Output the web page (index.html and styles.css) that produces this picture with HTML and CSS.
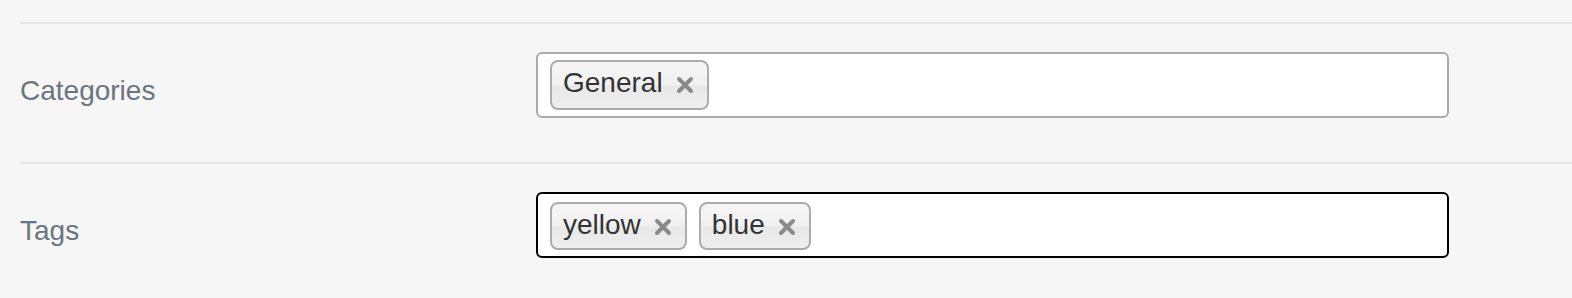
FILE: index.html
```html
<!DOCTYPE html>
<html>
<head>
<meta charset="utf-8">
<link rel="stylesheet" href="styles.css">
</head>
<body>
<div class="form">
  <div class="row">
    <div class="label">Categories</div>
    <div class="field">
      <div class="choices">
        <span class="tag">General<svg class="x" viewBox="0 0 20 20"><path d="M4 4L16 16M16 4L4 16"/></svg></span>
      </div>
    </div>
  </div>
  <div class="row">
    <div class="label">Tags</div>
    <div class="field">
      <div class="choices focus">
        <span class="tag">yellow<svg class="x" viewBox="0 0 20 20"><path d="M4 4L16 16M16 4L4 16"/></svg></span>
        <span class="tag">blue<svg class="x" viewBox="0 0 20 20"><path d="M4 4L16 16M16 4L4 16"/></svg></span>
      </div>
    </div>
  </div>
</div>
</body>
</html>
```
FILE: styles.css
```css
html, body {
  margin: 0;
  padding: 0;
  background: #f6f6f6;
  font-family: "Liberation Sans", Arial, sans-serif;
}
.form {
  padding: 22px 0 0 20px;
}
.row {
  display: grid;
  grid-template-columns: 516px 913px;
  height: 140px;
  border-top: 2px solid #e6e6e6;
  box-sizing: border-box;
}
.label {
  font-size: 28px;
  line-height: 32px;
  color: #6b7580;
  padding-top: 51px;
}
.field {
  padding-top: 28px;
}
.choices {
  box-sizing: border-box;
  width: 913px;
  height: 66px;
  border: 2px solid #ababab;
  border-radius: 6px;
  background: #fff;
  display: flex;
  gap: 12px;
  padding: 6px 12px;
  align-items: flex-start;
}
.choices.focus {
  border-color: #000;
  padding-top: 8px;
}
.tag {
  display: inline-flex;
  align-items: center;
  box-sizing: border-box;
  height: 50px;
  border: 2px solid #acacac;
  border-radius: 8px;
  background: linear-gradient(#f4f4f4 20%, #f0f0f0 50%, #e8e8e8 52%, #eeeeee 100%);
  color: #333;
  font-size: 28px;
  line-height: 32px;
  padding: 0 12px 4px 11px;
}
.focus .tag {
  height: 48px;
  padding-bottom: 2px;
}
.x {
  width: 20px;
  height: 20px;
  margin-left: 12px;
  margin-top: 4px;
  fill: none;
  stroke: #8a8a8a;
  stroke-width: 4;
  stroke-linecap: round;
}
```
